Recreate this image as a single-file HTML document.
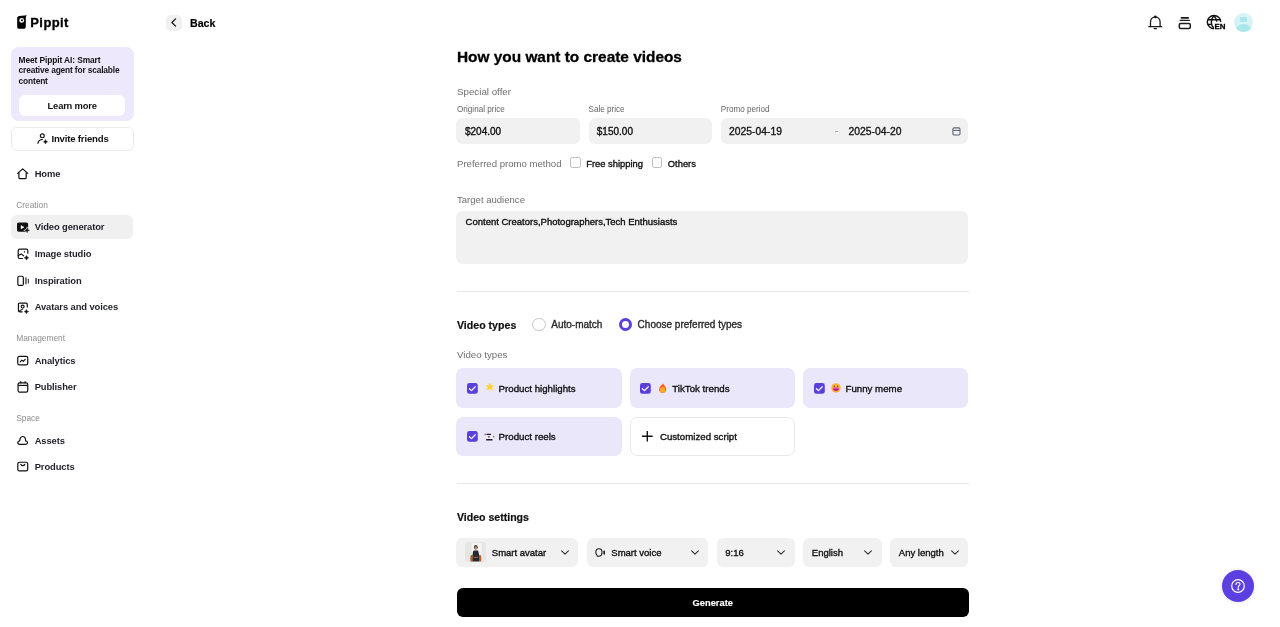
<!DOCTYPE html>
<html><head><meta charset="utf-8">
<style>
*{box-sizing:border-box;margin:0;padding:0}
html{background:#fff}
body{will-change:transform}
html,body{width:1280px;height:627px;overflow:hidden;font-family:"Liberation Sans",sans-serif;color:#1a1a1a}
.a{position:absolute}
.t{position:absolute;white-space:nowrap;line-height:1}
.m{-webkit-text-stroke:0.35px currentColor}
.nav{font-size:9.4px;font-weight:bold;color:#1f2029;letter-spacing:-0.1px}
.sec{font-size:8.4px;color:#8e8e8e}
.lbl{color:#707070}
.inp{position:absolute;background:#f1f1f1;border-radius:6px}
.card{position:absolute;background:#ebe7fb;border-radius:7px}
.cb{position:absolute;width:11px;height:11px;border-radius:2.5px;background:#5a3fdc}
.dd{position:absolute;background:#f1f1f1;border-radius:6px;top:538px;height:29px}
.chev{position:absolute;top:550px}
svg{position:absolute;overflow:visible}
</style></head><body>

<!-- ============ SIDEBAR ============ -->
<!-- logo -->
<svg style="left:17px;top:15px" width="11" height="14" viewBox="0 0 11 14">
  <path d="M2.3 0.9 L9.9 0.2 L9.6 0.8 C9 1.3 8.8 1.9 8.8 2.8 L8.8 11.4 C8.8 12.8 7.9 13.7 6.5 13.7 L1.9 13.7 C0.8 13.7 0.2 13.1 0.2 12 L0.2 3.1 C0.2 1.8 1 1 2.3 0.9 Z" fill="#000"/>
  <ellipse cx="4.7" cy="5.4" rx="2.4" ry="2.3" fill="#fff"/>
  <circle cx="5" cy="5.2" r="1" fill="#000"/>
</svg>
<div class="t" style="left:30.3px;top:16.4px;font-size:13px;font-weight:bold;letter-spacing:0.4px;color:#000;-webkit-text-stroke:0.3px #000">Pippit</div>

<!-- promo card -->
<div class="a" style="left:11px;top:47px;width:122.5px;height:74px;background:#eee8fd;border-radius:8px"></div>
<div class="t" style="left:18.6px;top:55.9px;font-size:8.4px;font-weight:bold;letter-spacing:-0.1px;color:#111">Meet Pippit AI: Smart</div>
<div class="t" style="left:18.6px;top:66.3px;font-size:8.4px;font-weight:bold;letter-spacing:-0.16px;color:#161616">creative agent for scalable</div>
<div class="t" style="left:18.6px;top:76.7px;font-size:8.4px;font-weight:bold;letter-spacing:-0.16px;color:#161616">content</div>
<div class="a" style="left:19px;top:95px;width:106.3px;height:21px;background:#fff;border-radius:6px"></div>
<div class="t" style="left:47.6px;top:100.6px;font-size:9.4px;font-weight:bold;letter-spacing:-0.2px;color:#111">Learn more</div>

<!-- invite -->
<div class="a" style="left:11px;top:126.6px;width:122.5px;height:24px;border:1px solid #ebebeb;border-radius:6px"></div>
<svg style="left:37px;top:133px" width="11" height="12" viewBox="0 0 11 12" fill="none" stroke="#111" stroke-width="1.15" stroke-linecap="round">
  <circle cx="5.3" cy="2.8" r="1.95"/>
  <path d="M0.9 10.3 C1.3 8 2.8 6.6 5.4 6.5"/>
  <path d="M8.5 6.7 L9.2 8.1 L10.6 8.8 L9.2 9.5 L8.5 10.9 L7.8 9.5 L6.4 8.8 L7.8 8.1 Z" fill="#111" stroke-width="0.5" stroke-linejoin="round"/>
</svg>
<div class="t" style="left:51.4px;top:134.1px;font-size:9.6px;font-weight:bold;letter-spacing:-0.18px;color:#111">Invite friends</div>

<!-- nav -->
<svg style="left:17px;top:168px" width="12" height="12" viewBox="0 0 12 12" fill="none" stroke="#111" stroke-width="1.2" stroke-linejoin="round" stroke-linecap="round">
  <path d="M0.6 5.4 L5.7 0.9 L10.8 5.4"/>
  <path d="M1.9 4.6 V9.4 C1.9 10.2 2.3 10.7 3.1 10.7 H8 C8.8 10.7 9.2 10.2 9.2 9.4 V4.6"/>
</svg>
<div class="t nav" style="left:34.7px;top:169px">Home</div>

<div class="t sec" style="left:16.2px;top:200.7px">Creation</div>
<div class="a" style="left:11px;top:214.6px;width:122px;height:24.7px;background:#f0f0f0;border-radius:6px"></div>
<svg style="left:17px;top:222px" width="14" height="13" viewBox="0 0 14 13">
  <rect x="0" y="0.4" width="11.1" height="9.3" rx="1.7" fill="#111"/>
  <path d="M4 3.6 L7 5.2 L4 6.8 Z" fill="#fff" stroke="#fff" stroke-width="0.5" stroke-linejoin="round"/>
  <path d="M10.10 4.50 L11.4 7.0 L13.9 8.30 L11.4 9.6 L10.10 12.1 L8.8 9.6 L6.3 8.30 L8.8 7.0 Z" fill="#f0f0f0"/>
  <path d="M10.10 5.90 L10.8 7.6 L12.5 8.30 L10.8 9.0 L10.10 10.70 L9.4 9.0 L7.7 8.30 L9.4 7.6 Z" fill="#111" stroke="#111" stroke-width="0.4" stroke-linejoin="round"/>
</svg>
<div class="t nav" style="left:34.7px;top:222.4px">Video generator</div>

<svg style="left:17px;top:248px" width="12" height="13" viewBox="0 0 12 13" fill="none" stroke="#111" stroke-width="1.2">
  <path d="M5.8 10.5 H2.6 C1.8 10.5 1.2 9.9 1.2 9.1 V2.6 C1.2 1.8 1.8 1.2 2.6 1.2 H9.4 C10.2 1.2 10.8 1.8 10.8 2.6 V5.8"/>
  <path d="M1.4 7.6 L4.2 5.9 L6.6 7.8" stroke-linecap="round" stroke-linejoin="round"/>
  <ellipse cx="7.4" cy="3.8" rx="0.6" ry="0.85" fill="#111" stroke="none"/>
  <path d="M9.5 7.5 L10.3 9.0 L11.8 9.8 L10.3 10.6 L9.5 12.1 L8.7 10.6 L7.2 9.8 L8.7 9.0 Z" fill="#111" stroke="#111" stroke-width="0.5" stroke-linejoin="round"/>
</svg>
<div class="t nav" style="left:34.7px;top:249px">Image studio</div>

<svg style="left:17px;top:274.5px" width="12" height="12" viewBox="0 0 12 12" fill="none" stroke="#111" stroke-width="1.2">
  <rect x="0.85" y="1.25" width="5.5" height="9.2" rx="1.5"/>
  <rect x="7.9" y="2.4" width="2" height="6.9" fill="#777" stroke="none"/>
  <rect x="10.8" y="3.7" width="1.1" height="4.7" rx="0.5" fill="#333" stroke="none"/>
</svg>
<div class="t nav" style="left:34.7px;top:275.6px">Inspiration</div>

<svg style="left:17px;top:301.5px" width="12" height="13" viewBox="0 0 12 13" fill="none" stroke="#111" stroke-width="1.2">
  <path d="M5.6 9.9 H2.7 C1.9 9.9 1.45 9.4 1.45 8.6 V2.4 C1.45 1.6 1.9 1.05 2.7 1.05 H9.0 C9.8 1.05 10.3 1.6 10.3 2.4 V5.4"/>
  <circle cx="5.6" cy="4.6" r="1.5"/>
  <path d="M2.4 9.4 C3 8.3 4 7.6 5.2 7.5" stroke-linecap="round"/>
  <path d="M9.4 7.4 L10.1 8.9 L11.6 9.6 L10.1 10.3 L9.4 11.8 L8.7 10.3 L7.2 9.6 L8.7 8.9 Z" fill="#111" stroke="#111" stroke-width="0.5" stroke-linejoin="round"/>
</svg>
<div class="t nav" style="left:34.7px;top:302.4px">Avatars and voices</div>

<div class="t sec" style="left:16.2px;top:334px">Management</div>
<svg style="left:17px;top:355px" width="12" height="12" viewBox="0 0 12 12" fill="none" stroke="#111" stroke-width="1.2">
  <rect x="0.75" y="1.45" width="10" height="8.4" rx="1.6"/>
  <path d="M3.2 6.9 L4.8 5.2 L6.4 6.2 L8.2 4.4" stroke-linecap="round" stroke-width="1.2"/>
</svg>
<div class="t nav" style="left:34.7px;top:355.8px">Analytics</div>

<svg style="left:17px;top:381px" width="12" height="12" viewBox="0 0 12 12" fill="none" stroke="#111" stroke-width="1.2">
  <rect x="1.05" y="1.8" width="9.7" height="9.3" rx="1.6"/>
  <path d="M1.05 4.4 H10.75"/>
  <path d="M3.7 0.2 V2.2 M8.1 0.2 V2.2"/>
</svg>
<div class="t nav" style="left:34.7px;top:382.1px">Publisher</div>

<div class="t sec" style="left:16.2px;top:414px">Space</div>
<svg style="left:17px;top:435px" width="12" height="12" viewBox="0 0 12 12" fill="none" stroke="#111" stroke-width="1.2">
  <path d="M2.8 9.4 H8.6 C9.8 9.4 10.5 8.6 10.5 7.6 C10.5 6.6 9.8 5.9 8.6 5.8 C8.6 3.6 7.4 1.5 5.6 1.5 C3.8 1.5 2.7 3.6 2.7 5.8 C1.6 5.9 0.8 6.6 0.8 7.6 C0.8 8.6 1.6 9.4 2.8 9.4 Z"/>
</svg>
<div class="t nav" style="left:34.7px;top:435.8px">Assets</div>

<svg style="left:17px;top:460.8px" width="12" height="12" viewBox="0 0 12 12" fill="none" stroke="#111" stroke-width="1.2">
  <rect x="0.8" y="1.25" width="9.9" height="8.7" rx="1.6"/>
  <path d="M3.8 3.4 C4.3 4.3 4.9 4.6 5.75 4.6 C6.6 4.6 7.2 4.3 7.7 3.4" stroke-linecap="round"/>
</svg>
<div class="t nav" style="left:34.7px;top:462.4px">Products</div>

<!-- ============ TOP BAR ============ -->
<div class="a" style="left:165.5px;top:14.5px;width:16px;height:16px;background:#f0f0f0;border-radius:5px"></div>
<svg style="left:170px;top:18px" width="8" height="9" viewBox="0 0 8 9" fill="none" stroke="#111" stroke-width="1.2" stroke-linecap="round" stroke-linejoin="round">
  <path d="M5.6 0.9 L1.9 4.5 L5.6 8.1"/>
</svg>
<div class="t" style="left:190px;top:18.1px;font-size:10.6px;font-weight:bold;color:#000;-webkit-text-stroke:0.2px #000">Back</div>

<!-- bell -->
<svg style="left:1148px;top:15px" width="15" height="15" viewBox="0 0 15 15" fill="none" stroke="#1a1a1a" stroke-width="1.3" stroke-linecap="round">
  <path d="M2.5 11.6 V7 C2.5 4.2 4.6 2 7.3 2 C10 2 12.1 4.2 12.1 7 V11.6"/>
  <path d="M0.9 11.7 H13.7"/>
  <path d="M6.1 13.6 H8.5"/>
  <circle cx="7.3" cy="1.9" r="0.7" fill="#1a1a1a"/>
</svg>
<!-- stack -->
<svg style="left:1178px;top:16px" width="14" height="14" viewBox="0 0 14 14" fill="none" stroke="#1a1a1a" stroke-linecap="round">
  <path d="M3.4 1.8 H10.2" stroke-width="1.7"/>
  <path d="M2.2 4.4 H11.4" stroke-width="1.1"/>
  <rect x="1.3" y="7.4" width="11" height="5.2" rx="1.5" stroke-width="1.5"/>
</svg>
<!-- globe EN -->
<svg style="left:1206px;top:15px" width="21" height="16" viewBox="0 0 21 16" fill="none" stroke="#111" stroke-width="1.4">
  <path d="M8.5 13.9 C4.6 13.9 1.3 10.7 1.3 7.1 C1.3 3.4 4.4 0.5 8 0.5 C11.6 0.5 14.6 3.3 14.7 6.9"/>
  <path d="M8 0.7 C5.9 2.9 5.3 5 5.3 7.2 C5.3 9.4 6 11.6 8 13.6"/>
  <path d="M8 0.7 C10.1 2.9 10.8 5 10.8 6.8"/>
  <path d="M1.6 4.8 H14.4 M1.6 9.4 H5.5"/>
</svg>
<div class="a" style="left:1214px;top:23.5px;width:12.5px;height:7px;background:#fff"></div><div class="t" style="left:1214.6px;top:22.9px;font-size:7.9px;font-weight:bold;color:#000;letter-spacing:-0.15px;-webkit-text-stroke:0.3px #000">EN</div>
<!-- avatar -->
<div class="a" style="left:1234px;top:13.4px;width:18.6px;height:18.6px;border-radius:50%;background:#d8f3f6;overflow:hidden">
  <div class="a" style="left:6px;top:3.6px;width:7.4px;height:5.4px;background:#a9e7ef;border-radius:1px"></div>
  <div class="a" style="left:2.2px;top:10.9px;width:14.4px;height:12px;background:#a9e7ef;border-radius:50%"></div>
</div>

<!-- ============ MAIN ============ -->
<div class="t" style="left:457px;top:48.6px;font-size:15.4px;font-weight:bold;color:#000;-webkit-text-stroke:0.3px #000">How you want to create videos</div>

<div class="t lbl" style="left:457px;top:87.2px;font-size:9.75px;color:#6e6e6e">Special offer</div>
<div class="t lbl" style="left:457px;top:106px;font-size:8.15px;color:#666">Original price</div>
<div class="t lbl" style="left:588.5px;top:106px;font-size:8.15px;color:#666">Sale price</div>
<div class="t lbl" style="left:720.8px;top:106px;font-size:8.15px;color:#666">Promo period</div>

<div class="inp" style="left:456.3px;top:118.1px;width:123.7px;height:26.3px"></div>
<div class="inp" style="left:588.5px;top:118.1px;width:123.4px;height:26.3px"></div>
<div class="inp" style="left:720.6px;top:118.1px;width:247.9px;height:26.3px"></div>
<div class="t m" style="left:465px;top:126.9px;font-size:10px;color:#111">$204.00</div>
<div class="t m" style="left:596.8px;top:126.9px;font-size:10px;color:#111">$150.00</div>
<div class="t m" style="left:729px;top:126.7px;font-size:10.35px;color:#161616">2025-04-19</div>
<div class="a" style="left:834.8px;top:131.2px;width:3.2px;height:0.9px;background:#aaa"></div>
<div class="t m" style="left:848.5px;top:126.7px;font-size:10.35px;color:#161616">2025-04-20</div>
<svg style="left:951.5px;top:126.9px" width="9" height="9" viewBox="0 0 9 9" fill="none" stroke="#5a6274" stroke-width="1.05">
  <rect x="0.9" y="0.85" width="7.1" height="7.1" rx="1.3"/>
  <path d="M0.9 3.4 H8"/>
</svg>

<div class="t lbl" style="left:457px;top:158.9px;font-size:9.6px;color:#707070">Preferred promo method</div>
<div class="a" style="left:570.2px;top:157.4px;width:10.8px;height:10.5px;border:1px solid #bdbdbd;border-radius:2.5px"></div>
<div class="t m" style="left:586.2px;top:159.2px;font-size:9.4px;color:#111">Free shipping</div>
<div class="a" style="left:651.6px;top:157.4px;width:10.8px;height:10.5px;border:1px solid #bdbdbd;border-radius:2.5px"></div>
<div class="t m" style="left:667.8px;top:159.2px;font-size:9.4px;color:#111">Others</div>

<div class="t lbl" style="left:457px;top:195.2px;font-size:9.55px;color:#707070">Target audience</div>
<div class="inp" style="left:456.4px;top:211.2px;width:512.1px;height:53.1px;border-radius:7px"></div>
<div class="t m" style="left:465.6px;top:217.3px;font-size:9.5px;color:#111">Content Creators,Photographers,Tech Enthusiasts</div>

<div class="a" style="left:457px;top:291px;width:511.5px;height:1px;background:#e9e9e9"></div>

<div class="t" style="left:457px;top:320px;font-size:10.6px;font-weight:bold;color:#111;-webkit-text-stroke:0.2px #111">Video types</div>
<div class="a" style="left:532.3px;top:317.6px;width:13.4px;height:13.4px;border:1px solid #c4c4c4;border-radius:50%"></div>
<div class="t" style="left:551.3px;top:320px;font-size:10px;color:#2a2a2a;-webkit-text-stroke:0.35px #2a2a2a">Auto-match</div>
<div class="a" style="left:619px;top:317.8px;width:13.3px;height:13.3px;border:3.6px solid #5a3fdc;border-radius:50%;background:#fff"></div>
<div class="t" style="left:637.6px;top:320px;font-size:10px;color:#2a2a2a;-webkit-text-stroke:0.35px #2a2a2a">Choose preferred types</div>

<div class="t lbl" style="left:457px;top:350.1px;font-size:9.7px;color:#707070">Video types</div>

<!-- cards row 1 -->
<div class="card" style="left:456.2px;top:368.4px;width:165.5px;height:39.8px"></div>
<div class="card" style="left:630px;top:368.4px;width:165px;height:39.8px"></div>
<div class="card" style="left:803.4px;top:368.4px;width:165.1px;height:39.8px"></div>
<!-- cards row 2 -->
<div class="card" style="left:456.2px;top:416.6px;width:165.5px;height:39.7px"></div>
<div class="a" style="left:630px;top:416.6px;width:165px;height:39.7px;border:1px solid #e9e9e9;border-radius:7px;background:#fff"></div>

<!-- checkboxes -->
<svg style="left:466.7px;top:383px" width="11" height="11" viewBox="0 0 11 11"><rect width="10.8" height="10.8" rx="2.4" fill="#5a3fdc"/><path d="M2.4 5.7 L4.5 7.6 L8.3 3.8" fill="none" stroke="#fff" stroke-width="1.25" stroke-linecap="round" stroke-linejoin="round"/></svg>
<svg style="left:640.4px;top:383px" width="11" height="11" viewBox="0 0 11 11"><rect width="10.8" height="10.8" rx="2.4" fill="#5a3fdc"/><path d="M2.4 5.7 L4.5 7.6 L8.3 3.8" fill="none" stroke="#fff" stroke-width="1.25" stroke-linecap="round" stroke-linejoin="round"/></svg>
<svg style="left:813.9px;top:383px" width="11" height="11" viewBox="0 0 11 11"><rect width="10.8" height="10.8" rx="2.4" fill="#5a3fdc"/><path d="M2.4 5.7 L4.5 7.6 L8.3 3.8" fill="none" stroke="#fff" stroke-width="1.25" stroke-linecap="round" stroke-linejoin="round"/></svg>
<svg style="left:466.7px;top:431.2px" width="11" height="11" viewBox="0 0 11 11"><rect width="10.8" height="10.8" rx="2.4" fill="#5a3fdc"/><path d="M2.4 5.7 L4.5 7.6 L8.3 3.8" fill="none" stroke="#fff" stroke-width="1.25" stroke-linecap="round" stroke-linejoin="round"/></svg>

<!-- emojis -->
<svg style="left:484.5px;top:383px" width="10" height="9" viewBox="0 0 10 9">
  <path d="M4.8 0.2 L5.9 2.5 L8.4 2.7 L6.5 4.4 L7.1 6.9 L4.8 5.6 L2.5 6.9 L3.1 4.4 L1.2 2.7 L3.7 2.5 Z" fill="#ffd12e" stroke="#ffd12e" stroke-width="0.6" stroke-linejoin="round"/>
  <circle cx="1" cy="5.6" r="0.55" fill="#ffd84a"/>
  <circle cx="9" cy="5.6" r="0.55" fill="#ffd84a"/>
  <circle cx="4.8" cy="8.4" r="0.55" fill="#ffd84a"/>
  <circle cx="2.2" cy="0.6" r="0.45" fill="#ffe27a"/>
  <circle cx="7.2" cy="0.6" r="0.45" fill="#ffe27a"/>
</svg>
<svg style="left:658.8px;top:382.6px" width="8" height="11" viewBox="0 0 8 11">
  <path d="M3.9 0.5 C4.9 1.8 7.2 3.7 7.2 6.6 C7.2 8.7 5.7 10.1 3.6 10.1 C1.5 10.1 0.1 8.7 0.1 6.6 C0.1 4.4 1.6 3.2 2.6 2.1 C3.2 1.5 3.7 1 3.9 0.5 Z" fill="#ff5f1c"/>
  <ellipse cx="3.6" cy="6.9" rx="2.6" ry="2.9" fill="#ffa62b"/>
</svg>
<svg style="left:831.2px;top:383px" width="10" height="10" viewBox="0 0 10 10">
  <circle cx="5" cy="4.9" r="4.75" fill="#fbb03b"/>
  <ellipse cx="3.3" cy="3.3" rx="0.6" ry="0.75" fill="#6a3a10"/>
  <ellipse cx="6.6" cy="3.3" rx="0.6" ry="0.75" fill="#6a3a10"/>
  <path d="M1.9 5.1 C3.6 4.7 6.4 4.7 8.1 5.1 C8 7.2 6.6 8.1 5 8.1 C3.4 8.1 2 7.2 1.9 5.1 Z" fill="#b8108e"/>
  <path d="M1.9 5.1 C3.6 4.7 6.4 4.7 8.1 5.1 C8.1 5.6 8 5.9 7.9 6.2 C6.4 5.9 3.6 5.9 2.1 6.2 C2 5.9 1.9 5.6 1.9 5.1 Z" fill="#d94ac2"/>
</svg>
<svg style="left:484px;top:433px" width="11" height="8" viewBox="0 0 11 8">
  <rect x="0.3" y="0.5" width="1.8" height="2" rx="0.9" fill="#9a90a8"/>
  <rect x="2.3" y="0.8" width="4.8" height="1.3" rx="0.6" fill="#2a1438"/>
  <rect x="2" y="2.5" width="7" height="3.5" fill="#f2f0ea"/>
  <rect x="4.2" y="3.1" width="1.4" height="1.4" fill="#3a2048"/>
  <rect x="2" y="6" width="6.6" height="1.6" rx="0.7" fill="#2a1438"/>
  <rect x="9" y="2.8" width="1.4" height="1.8" rx="0.7" fill="#8a7a98"/>
</svg>

<div class="t m" style="left:498.6px;top:383.6px;font-size:9.7px;color:#111">Product highlights</div>
<div class="t m" style="left:672.3px;top:383.6px;font-size:9.7px;color:#111">TikTok trends</div>
<div class="t m" style="left:845.5px;top:383.6px;font-size:9.7px;color:#111">Funny meme</div>
<div class="t m" style="left:498.6px;top:431.8px;font-size:9.7px;color:#111">Product reels</div>
<svg style="left:642.3px;top:431.4px" width="11" height="11" viewBox="0 0 11 11" stroke="#111" stroke-width="1.4"><path d="M5.3 0 V10.6 M0 5.3 H10.6"/></svg>
<div class="t m" style="left:659.9px;top:431.8px;font-size:9.7px;color:#111">Customized script</div>

<div class="a" style="left:457px;top:483.3px;width:511.5px;height:1px;background:#e9e9e9"></div>

<div class="t" style="left:457px;top:512.3px;font-size:10.56px;font-weight:bold;color:#111;-webkit-text-stroke:0.2px #111">Video settings</div>

<!-- dropdowns -->
<div class="dd" style="left:456px;width:122px"></div>
<div class="dd" style="left:586.5px;width:121.6px"></div>
<div class="dd" style="left:716.7px;width:78px"></div>
<div class="dd" style="left:803.3px;width:78.3px"></div>
<div class="dd" style="left:890.1px;width:78.2px"></div>

<!-- avatar thumb -->
<div class="a" style="left:465.4px;top:542.2px;width:20.4px;height:20.3px;background:#e6e6e6;border-radius:3px"></div>
<svg style="left:470px;top:542.6px" width="11.6" height="18.6" viewBox="0 0 11.6 18.6">
  <rect width="11.6" height="18.6" fill="#f4f5f3"/>
  <rect x="0" y="0" width="1.6" height="18.6" fill="#e2e4e0"/>
  <path d="M0.4 13.5 C0.6 12.2 1.6 11.8 2.6 12 L2.8 18.6 H0.4 Z M11.2 13.5 C11 12.2 10 11.8 9 12 L8.8 18.6 H11.2 Z" fill="#c4561f"/>
  <ellipse cx="5.8" cy="4.3" rx="1.9" ry="2.2" fill="#4a3a30"/>
  <ellipse cx="5.8" cy="5" rx="1.4" ry="1.5" fill="#b58a6e"/>
  <path d="M2.6 18.4 C2.4 12 2.6 8.2 4 7.6 L7.6 7.6 C9 8.2 9.2 12 9 18.4 Z" fill="#262a30"/>
  <path d="M3.4 13.2 C4.4 14.2 5 14.4 5.8 13.4 C6.6 14.4 7.2 14.2 8.2 13.2 L8.2 14.4 C7 15 4.6 15 3.4 14.4 Z" fill="#a57a62"/>
</svg>
<div class="t m" style="left:491.8px;top:547.9px;font-size:9.5px;color:#111">Smart avatar</div>
<svg style="left:595px;top:547.5px" width="11" height="9" viewBox="0 0 11 9" fill="none" stroke="#1a1a1a" stroke-width="1.1" stroke-linecap="round">
  <path d="M2.4 8.3 C2.3 7.6 2.2 7.2 1.6 6.6 C1 6 0.8 5.2 0.8 4.3 C0.8 2.1 2.3 0.7 4 0.7 C5.8 0.7 7 2.1 7 4.2 C7 6.6 5.6 8.3 3.6 8.3 Z"/>
  <path d="M9.2 3.3 V5.9" stroke-width="1.6"/>
</svg>
<div class="t m" style="left:611.3px;top:547.9px;font-size:9.5px;color:#111">Smart voice</div>
<div class="t m" style="left:725.3px;top:547.9px;font-size:9.5px;color:#111">9:16</div>
<div class="t m" style="left:811.8px;top:547.9px;font-size:9.5px;color:#111">English</div>
<div class="t m" style="left:898.8px;top:547.9px;font-size:9.5px;color:#111">Any length</div>

<svg class="chev" style="left:560.5px" width="8" height="5" viewBox="0 0 8 5" fill="none" stroke="#333" stroke-width="1.1" stroke-linecap="round" stroke-linejoin="round"><path d="M0.6 0.8 L4 4.2 L7.4 0.8"/></svg>
<svg class="chev" style="left:690.5px" width="8" height="5" viewBox="0 0 8 5" fill="none" stroke="#333" stroke-width="1.1" stroke-linecap="round" stroke-linejoin="round"><path d="M0.6 0.8 L4 4.2 L7.4 0.8"/></svg>
<svg class="chev" style="left:777.3px" width="8" height="5" viewBox="0 0 8 5" fill="none" stroke="#333" stroke-width="1.1" stroke-linecap="round" stroke-linejoin="round"><path d="M0.6 0.8 L4 4.2 L7.4 0.8"/></svg>
<svg class="chev" style="left:863.8px" width="8" height="5" viewBox="0 0 8 5" fill="none" stroke="#333" stroke-width="1.1" stroke-linecap="round" stroke-linejoin="round"><path d="M0.6 0.8 L4 4.2 L7.4 0.8"/></svg>
<svg class="chev" style="left:950.5px" width="8" height="5" viewBox="0 0 8 5" fill="none" stroke="#333" stroke-width="1.1" stroke-linecap="round" stroke-linejoin="round"><path d="M0.6 0.8 L4 4.2 L7.4 0.8"/></svg>

<!-- generate -->
<div class="a" style="left:456.5px;top:588.3px;width:512px;height:29.2px;background:#000;border-radius:6px"></div>
<div class="t" style="left:692.6px;top:598.5px;font-size:9.3px;font-weight:bold;color:#fff;-webkit-text-stroke:0.15px #fff">Generate</div>

<!-- help -->
<div class="a" style="left:1222px;top:569.6px;width:32px;height:32px;border-radius:50%;background:#5b3fe0;box-shadow:0 0 4px rgba(0,0,0,0.12)"></div>
<svg style="left:1231px;top:578.6px" width="14" height="14" viewBox="0 0 14 14" fill="none" stroke="#fff" stroke-width="1.2" stroke-linecap="round">
  <circle cx="7" cy="7" r="6.3"/>
  <path d="M5 5.4 C5 4.2 5.9 3.5 7 3.5 C8.1 3.5 9 4.2 9 5.3 C9 6.5 7.2 6.8 7.2 8.3"/>
  <circle cx="7.2" cy="10.3" r="0.5" fill="#fff"/>
</svg>

</body></html>
